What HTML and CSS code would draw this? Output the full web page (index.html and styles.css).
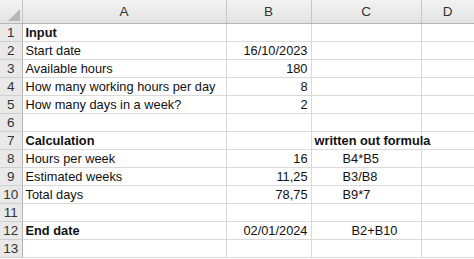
FILE: index.html
```html
<!DOCTYPE html>
<html>
<head>
	<meta charset="UTF-8">
	<title>Planning</title>
	<link rel="stylesheet" href="styles.css">
</head>
<body>
	<table class="sheet">
		<colgroup>
			<col class="col_num">
			<col class="col_a">
			<col class="col_b">
			<col class="col_c">
			<col class="col_d">
		</colgroup>
		<tr class="heads">
			<th class="corner"><span class="triangle"></span></th>
			<th>A</th>
			<th>B</th>
			<th>C</th>
			<th>D</th>
		</tr>
		<tr><td class="num">1</td><td class="bold">Input</td><td></td><td></td><td></td></tr>
		<tr><td class="num">2</td><td>Start date</td><td class="right">16/10/2023</td><td></td><td></td></tr>
		<tr><td class="num">3</td><td>Available hours</td><td class="right">180</td><td></td><td></td></tr>
		<tr><td class="num">4</td><td>How many working hours per day</td><td class="right">8</td><td></td><td></td></tr>
		<tr><td class="num">5</td><td>How many days in a week?</td><td class="right">2</td><td></td><td></td></tr>
		<tr><td class="num">6</td><td></td><td></td><td></td><td></td></tr>
		<tr><td class="num">7</td><td class="bold">Calculation</td><td></td><td class="bold spill">written out formula</td><td></td></tr>
		<tr><td class="num">8</td><td>Hours per week</td><td class="right">16</td><td class="formula">B4*B5</td><td></td></tr>
		<tr><td class="num">9</td><td>Estimated weeks</td><td class="right">11,25</td><td class="formula">B3/B8</td><td></td></tr>
		<tr><td class="num">10</td><td>Total days</td><td class="right">78,75</td><td class="formula">B9*7</td><td></td></tr>
		<tr><td class="num">11</td><td></td><td></td><td></td><td></td></tr>
		<tr><td class="num">12</td><td class="bold">End date</td><td class="right">02/01/2024</td><td class="formula wide">B2+B10</td><td></td></tr>
		<tr><td class="num">13</td><td></td><td></td><td></td><td></td></tr>
	</table>
</body>
</html>
```

FILE: styles.css
```css
body {
	margin: 0;
	overflow: hidden;
	background: #fff;
	font-family: "Liberation Sans", Arial, sans-serif;
	font-size: 12.8px;
	color: #111;
}

.sheet {
	border-collapse: collapse;
	table-layout: fixed;
	width: 474px;
}

.col_num { width: 22px; }
.col_a { width: 204px; }
.col_b { width: 85px; }
.col_c { width: 110px; }
.col_d { width: 53px; }

.sheet td, .sheet th {
	height: 17px;
	padding: 0 3px;
	border: 1px solid #dadada;
	white-space: nowrap;
	overflow: hidden;
	vertical-align: bottom;
	line-height: 16px;
}

/* long text runs on into the empty cell to its right */
.sheet td.spill {
	overflow: visible;
}

.heads th {
	height: 23px;
	border-top: none;
	border-color: #c6c6c6;
	border-bottom: 1px solid #b4b4b4;
	background: linear-gradient(#f2f2f2, #e3e3e3);
	font-weight: normal;
	font-size: 13.5px;
	color: #333;
	vertical-align: middle;
	text-align: center;
}

.heads th:first-child, .sheet td.num {
	border-left: none;
}

.corner {
	position: relative;
	border-right: 1px solid #b4b4b4;
}

.triangle {
	position: absolute;
	right: 2px;
	bottom: 2px;
	width: 0;
	height: 0;
	border-left: 12px solid transparent;
	border-bottom: 12px solid #b8b8b8;
}

.sheet td.num {
	padding: 0;
	text-align: center;
	background: #e9e9e9;
	color: #333;
	border-color: #cfcfcf;
	border-right: 1px solid #b4b4b4;
	font-size: 13.5px;
}

.bold {
	font-weight: bold;
}

.right {
	text-align: right;
}

.sheet td.formula {
	padding-left: 31px;
}

.sheet td.formula.wide {
	padding-left: 40px;
}
```
